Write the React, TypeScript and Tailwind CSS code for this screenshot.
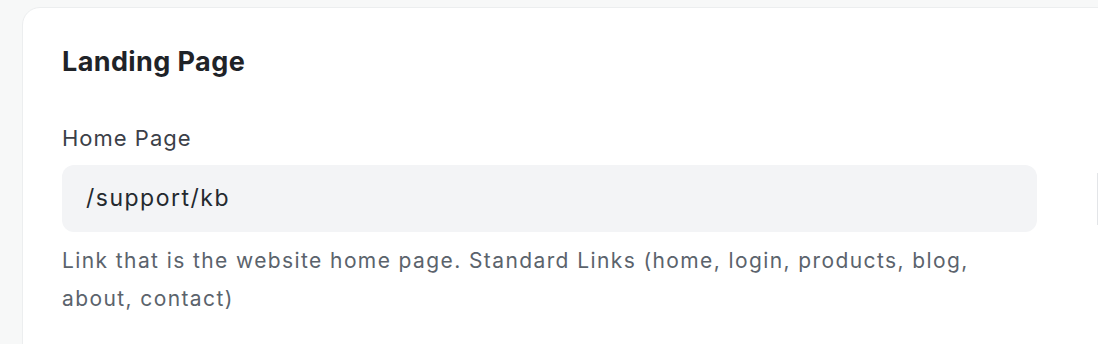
export default function App() {
  return (
    <div className="h-[344px] w-[1098px] overflow-hidden bg-[#f7f8f8] pl-[22px] pt-[7px]" style={{ fontFamily: "Inter, 'Noto Sans', sans-serif" }}>
      <div className="flex h-[400px] w-[1120px] flex-col rounded-tl-[18px] border border-[#eceeef] bg-white pl-[39px] pt-[36px]">
        <h2 className="text-[27px] font-bold leading-[36px] tracking-[0.4px] text-[#1f2328]">Landing Page</h2>
        <label className="mt-[43px] text-[22px] leading-[30px] tracking-[1px] text-[#3b4048]">Home Page</label>
        <div className="mt-[12px] flex items-center">
          <div className="flex h-[67px] w-[975px] items-center rounded-[12px] bg-[#f3f4f6] px-[24px] text-[23px] tracking-[1.5px] text-[#24292f]">
            /support/kb
          </div>
          <div className="ml-[60px] h-[52px] w-[20px] border-l border-[#e3e5e8]" />
        </div>
        <p className="mt-[10px] w-[975px] text-[21px] leading-[38px] tracking-[1.4px] text-[#5b636c]">
          Link that is the website home page. Standard Links (home, login, products, blog, about, contact)
        </p>
      </div>
    </div>
  );
}
